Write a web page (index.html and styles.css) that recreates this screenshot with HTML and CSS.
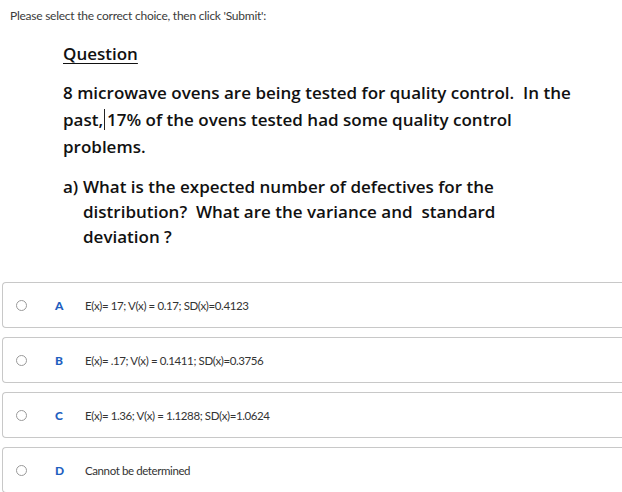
FILE: index.html
```html
<!DOCTYPE html>
<html>
<head>
<meta charset="utf-8">
<link rel="stylesheet" href="styles.css">
</head>
<body>
<p class="prompt">Please select the correct choice, then click 'Submit':</p>
<div class="question">
  <div class="q-title">Question</div>
  <p class="q-text">8 microwave ovens are being tested for quality control.&nbsp; In the past,<span class="caret"></span>17% of the ovens tested had some quality control problems.</p>
  <div class="q-part">
    <span class="q-label">a)</span>
    <span class="q-body">What is the expected number of defectives for the distribution?&nbsp; What are the variance and&nbsp; standard deviation ?</span>
  </div>
</div>
<div class="choices">
  <div class="choice"><span class="radio"></span><span class="letter">A</span><span class="ans">E(x)= 17; V(x) = 0.17; SD(x)=0.4123</span></div>
  <div class="choice"><span class="radio"></span><span class="letter">B</span><span class="ans">E(x)= .17; V(x) = 0.1411; SD(x)=0.3756</span></div>
  <div class="choice"><span class="radio"></span><span class="letter">C</span><span class="ans">E(x)= 1.36; V(x) = 1.1288; SD(x)=1.0624</span></div>
  <div class="choice"><span class="radio"></span><span class="letter">D</span><span class="ans">Cannot be determined</span></div>
</div>
</body>
</html>
```
FILE: styles.css
```css
html, body { margin: 0; padding: 0; background: #fff; }
body { font-family: "Open Sans", sans-serif; color: #333; overflow: hidden; }
.prompt {
  margin: 0;
  padding: 8px 0 0 10px;
  font-family: "Lato", sans-serif;
  font-size: 12px;
  letter-spacing: -0.25px;
  color: #3b3b3b;
  line-height: 16px;
}
.question {
  padding: 18px 40px 0 63px;
  font-family: "Open Sans", sans-serif;
  font-weight: 600;
  color: #111;
  font-size: 17px;
}
.q-title {
  display: inline-block;
  text-decoration: underline;
  text-underline-offset: 3px;
  line-height: 24px;
}
.q-text {
  margin: 13px 0 0 0;
  line-height: 27px;
}
.caret {
  display: inline-block;
  width: 1px;
  height: 21px;
  background: #222;
  vertical-align: -4px;
  margin: 0 2px 0 1px;
}
.q-part {
  display: flex;
  margin-top: 14px;
  line-height: 25px;
}
.q-label { width: 20px; flex: none; }
.q-body { width: 430px; }
.choices {
  margin-top: 33px;
  padding: 0 0 0 2px;
  display: flex;
  flex-direction: column;
  gap: 9px;
}
.choice {
  display: flex;
  align-items: center;
  height: 46px;
  border: 1px solid #c8c8c8;
  border-right: none;
  border-radius: 4px 0 0 4px;
  box-sizing: border-box;
  font-family: "Lato", sans-serif;
  font-size: 11.5px;
}
.radio {
  width: 11px;
  height: 11px;
  border: 1px solid #9a9a9a;
  border-radius: 50%;
  box-sizing: border-box;
  margin-left: 13px;
  flex: none;
}
.letter {
  margin-left: 28px;
  width: 30px;
  color: #1f5fbf;
  font-weight: 900;
  font-size: 12px;
}
.ans { color: #333; letter-spacing: -0.4px; }
```
